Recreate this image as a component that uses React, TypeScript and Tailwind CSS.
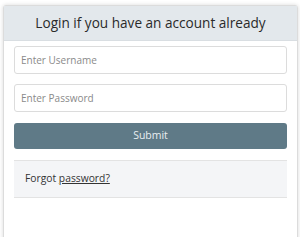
import React from "react";

export default function App() {
  return (
    <div className="h-[237px] w-[300px] overflow-hidden bg-white pl-[3px] pr-[2px] pt-[5px]" style={{ fontFamily: '"Open Sans", sans-serif' }}>
      <div className="h-[240px] rounded-t-[3px] border border-[#dcdcdc] bg-white shadow-[0_0_4px_rgba(0,0,0,0.15)]">
        <div className="flex h-[35px] items-center justify-center border-b border-[#d9dee2] bg-[#e3e8ec] text-[13.6px] text-[#2a2a2a]">
          Login if you have an account already
        </div>
        <div className="flex flex-col px-[10px] pt-[5px]">
          <input
            className="h-[28px] rounded-[3px] border border-[#dcdcdc] px-[6px] text-[10px] text-[#333] placeholder:text-[#8a8a8a] outline-none"
            placeholder="Enter Username"
          />
          <input
            className="mt-[10px] h-[28px] rounded-[3px] border border-[#dcdcdc] px-[6px] text-[10px] text-[#333] placeholder:text-[#8a8a8a] outline-none"
            placeholder="Enter Password"
          />
          <button className="mt-[11px] h-[26px] rounded-[3px] bg-[#5f7a87] text-[10.5px] text-[#e8eef1]">
            Submit
          </button>
          <div className="mt-[11px] flex h-[38px] items-center border-y border-[#e3e3e3] bg-[#f4f5f7] px-[11px] text-[10.3px] text-[#333]">
            Forgot&nbsp;<span className="underline">password?</span>
          </div>
        </div>
      </div>
    </div>
  );
}
